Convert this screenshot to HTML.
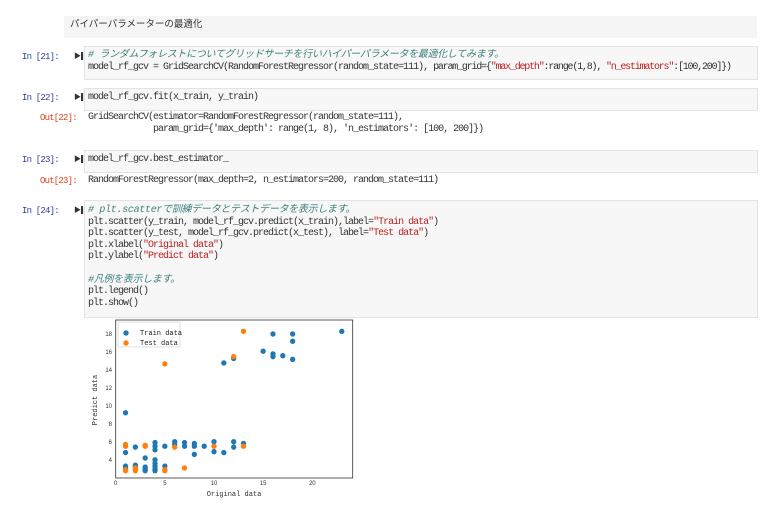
<!DOCTYPE html><html><head><meta charset="utf-8"><style>
body{margin:0;width:768px;height:513px;background:#fff;position:relative;overflow:hidden;font-family:"Liberation Mono","Noto Sans CJK JP",monospace;}
.box{position:absolute;left:84px;width:672px;background:#f7f7f7;border:1px solid #e3e3e3;}
.t{position:absolute;font-size:10px;letter-spacing:-1px;white-space:pre;line-height:12px;color:#333;}
.p{position:absolute;font-size:9px;letter-spacing:-0.8px;color:#303f9f;left:22px;line-height:12px;}
.o{position:absolute;font-size:9px;letter-spacing:-0.8px;color:#d84315;left:40px;line-height:12px;}
.ic{position:absolute;left:74px;font-size:7px;font-weight:bold;color:#333;line-height:12px;}
.c{color:#408080;font-style:italic}.s{color:#ba2121}
</style></head><body>
<div style="position:absolute;left:64px;top:16px;width:693px;height:22px;background:#f5f5f5;"></div>
<div class="t" style="left:70px;top:19px;font-family:'Liberation Sans','Noto Sans CJK JP',sans-serif;font-size:9.5px;letter-spacing:0">パイパーパラメーターの最適化</div>

<div class="box" style="top:46px;height:32px"></div>
<div class="p" style="top:51px">In [21]:</div><div class="ic" style="top:51px">▶▌</div>
<div class="t" style="left:88px;top:50px"><span class="c" style="letter-spacing:-0.3px"># ランダムフォレストについてグリッドサーチを行いハイパーパラメータを最適化してみます。</span>
model_rf_gcv = GridSearchCV(RandomForestRegressor(random_state=111), <span style="letter-spacing:-1.2px">param_grid={<span class="s">"max_depth"</span>:range(1,8), <span class="s">"n_estimators"</span>:[100,200]})</span></div>

<div class="box" style="top:88px;height:21px"></div>
<div class="p" style="top:92px">In [22]:</div><div class="ic" style="top:92px">▶▌</div>
<div class="t" style="left:88px;top:92px">model_rf_gcv.fit(x_train, y_train)</div>
<div class="o" style="top:112px">Out[22]:</div>
<div class="t" style="left:88px;top:112px">GridSearchCV(estimator=RandomForestRegressor(random_state=111),
             param_grid={'max_depth': range(1, 8), 'n_estimators': [100, 200]})</div>

<div class="box" style="top:150px;height:21px"></div>
<div class="p" style="top:154px">In [23]:</div><div class="ic" style="top:154px">▶▌</div>
<div class="t" style="left:88px;top:154px">model_rf_gcv.best_estimator_</div>
<div class="o" style="top:175px">Out[23]:</div>
<div class="t" style="left:88px;top:175px">RandomForestRegressor(max_depth=2, n_estimators=200, random_state=111)</div>

<div class="box" style="top:200px;height:116px"></div>
<div class="p" style="top:205px">In [24]:</div><div class="ic" style="top:205px">▶▌</div>
<div class="t" style="left:88px;top:205px;line-height:11.6px"><span class="c" style="letter-spacing:-0.3px"># plt.scatterで訓練データとテストデータを表示します。</span>
plt.scatter(y_train, model_rf_gcv.predict(x_train),label=<span class="s">"Train data"</span>)
plt.scatter(y_test, model_rf_gcv.predict(x_test), label=<span class="s">"Test data"</span>)
plt.xlabel(<span class="s">"Original data"</span>)
plt.ylabel(<span class="s">"Predict data"</span>)

<span class="c" style="letter-spacing:-0.3px">#凡例を表示します。</span>
plt.legend()
plt.show()</div>

<svg style="position:absolute;left:0;top:0" width="768" height="513">
<rect x="115.7" y="320" width="237" height="158" fill="none" stroke="#333" stroke-width="0.8"/>
<g font-family="Liberation Sans,sans-serif" font-size="6" fill="#333" text-anchor="middle">
<text x="115.7" y="485">0</text><text x="164.9" y="485">5</text><text x="214" y="485">10</text><text x="263.2" y="485">15</text><text x="312.3" y="485">20</text>
<text x="234" y="496" font-size="7" font-family="Liberation Mono,monospace">Original data</text>
<g text-anchor="end"><text x="112" y="336">18</text><text x="112" y="354">16</text><text x="112" y="372">14</text><text x="112" y="390">12</text><text x="112" y="408">10</text><text x="112" y="426">8</text><text x="112" y="444">6</text><text x="112" y="462">4</text></g>
<text transform="translate(97,400) rotate(-90)" font-size="7" font-family="Liberation Mono,monospace">Predict data</text>
</g>
<g transform="translate(115.7,496.9) scale(9.83,-9.05)">
<g fill="#1f77b4">
<ellipse cx="1" cy="9.3" rx=".27" ry=".3"/><ellipse cx="1" cy="4.9" rx=".27" ry=".3"/><ellipse cx="1" cy="3.4" rx=".27" ry=".3"/><ellipse cx="1" cy="3.2" rx=".27" ry=".3"/><ellipse cx="2" cy="5.5" rx=".27" ry=".3"/><ellipse cx="2" cy="3.5" rx=".27" ry=".3"/><ellipse cx="2" cy="3.3" rx=".27" ry=".3"/><ellipse cx="3" cy="4.3" rx=".27" ry=".3"/><ellipse cx="3" cy="3.3" rx=".27" ry=".3"/><ellipse cx="3" cy="3.1" rx=".27" ry=".3"/><ellipse cx="3" cy="2.9" rx=".27" ry=".3"/><ellipse cx="4" cy="6" rx=".27" ry=".3"/><ellipse cx="4" cy="5.6" rx=".27" ry=".3"/><ellipse cx="4" cy="5.2" rx=".27" ry=".3"/><ellipse cx="4" cy="4.1" rx=".27" ry=".3"/><ellipse cx="4" cy="3.7" rx=".27" ry=".3"/><ellipse cx="4" cy="3.4" rx=".27" ry=".3"/><ellipse cx="4" cy="3.1" rx=".27" ry=".3"/><ellipse cx="4" cy="2.9" rx=".27" ry=".3"/><ellipse cx="5" cy="5.6" rx=".27" ry=".3"/><ellipse cx="5" cy="3.4" rx=".27" ry=".3"/><ellipse cx="6" cy="6.1" rx=".27" ry=".3"/><ellipse cx="6" cy="5.8" rx=".27" ry=".3"/><ellipse cx="7" cy="6" rx=".27" ry=".3"/><ellipse cx="7" cy="5.6" rx=".27" ry=".3"/><ellipse cx="8" cy="5.9" rx=".27" ry=".3"/><ellipse cx="8" cy="5.6" rx=".27" ry=".3"/><ellipse cx="8" cy="4.7" rx=".27" ry=".3"/><ellipse cx="9" cy="5.6" rx=".27" ry=".3"/><ellipse cx="10" cy="6.1" rx=".27" ry=".3"/><ellipse cx="10" cy="5" rx=".27" ry=".3"/><ellipse cx="11" cy="4.9" rx=".27" ry=".3"/><ellipse cx="11" cy="14.8" rx=".27" ry=".3"/><ellipse cx="12" cy="15.3" rx=".27" ry=".3"/><ellipse cx="12" cy="6.1" rx=".27" ry=".3"/><ellipse cx="12" cy="5.5" rx=".27" ry=".3"/><ellipse cx="13" cy="5.9" rx=".27" ry=".3"/><ellipse cx="15" cy="16.1" rx=".27" ry=".3"/><ellipse cx="16" cy="18" rx=".27" ry=".3"/><ellipse cx="16" cy="15.8" rx=".27" ry=".3"/><ellipse cx="16" cy="15.5" rx=".27" ry=".3"/><ellipse cx="17" cy="15.6" rx=".27" ry=".3"/><ellipse cx="18" cy="18" rx=".27" ry=".3"/><ellipse cx="18" cy="17.2" rx=".27" ry=".3"/><ellipse cx="18" cy="15.2" rx=".27" ry=".3"/><ellipse cx="23" cy="18.3" rx=".27" ry=".3"/>
</g><g fill="#ff7f0e">
<ellipse cx="1" cy="5.8" rx=".27" ry=".3"/><ellipse cx="1" cy="5.6" rx=".27" ry=".3"/><ellipse cx="1" cy="3" rx=".27" ry=".3"/><ellipse cx="1" cy="2.9" rx=".27" ry=".3"/><ellipse cx="2" cy="3.2" rx=".27" ry=".3"/><ellipse cx="2" cy="3" rx=".27" ry=".3"/><ellipse cx="2" cy="2.9" rx=".27" ry=".3"/><ellipse cx="3" cy="5.7" rx=".27" ry=".3"/><ellipse cx="3" cy="5.6" rx=".27" ry=".3"/><ellipse cx="5" cy="14.7" rx=".27" ry=".3"/><ellipse cx="5" cy="3" rx=".27" ry=".3"/><ellipse cx="5" cy="2.9" rx=".27" ry=".3"/><ellipse cx="6" cy="5.5" rx=".27" ry=".3"/><ellipse cx="7" cy="3.2" rx=".27" ry=".3"/><ellipse cx="10" cy="5.6" rx=".27" ry=".3"/><ellipse cx="12" cy="15.5" rx=".27" ry=".3"/><ellipse cx="13" cy="18.3" rx=".27" ry=".3"/><ellipse cx="13" cy="5.6" rx=".27" ry=".3"/>
</g></g>
<rect x="118" y="322" width="62" height="25" fill="#fff" stroke="#ccc" stroke-width="0.6"/>
<circle cx="126" cy="333" r="2.7" fill="#1f77b4"/><circle cx="126" cy="343" r="2.7" fill="#ff7f0e"/>
<text x="140" y="335" font-size="7" font-family="Liberation Mono,monospace" fill="#222">Train data</text>
<text x="140" y="345" font-size="7" font-family="Liberation Mono,monospace" fill="#222">Test data</text>
</svg>
</body></html>
